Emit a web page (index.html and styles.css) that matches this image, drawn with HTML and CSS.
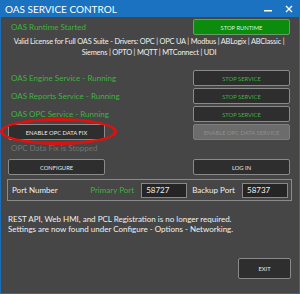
FILE: index.html
```html
<!DOCTYPE html>
<html lang="en">
<head>
    <meta charset="UTF-8">
    <title>OAS Service Control</title>
    <link rel="stylesheet" href="styles.css">
</head>
<body>
    <div class="window">
        <div class="title-bar">
            <span class="title">OAS SERVICE CONTROL</span>
            <span class="controls">
                <svg width="8" height="8" viewBox="0 0 8 8"><rect x="0" y="5" width="8" height="1.5" fill="#fff"/></svg>
                <svg width="8" height="8" viewBox="0 0 8 8"><path d="M1 1 L7 7 M7 1 L1 7" stroke="#fff" stroke-width="1.4"/></svg>
            </span>
        </div>

        <div class="content">
            <div class="row first">
                <span class="status green">OAS Runtime Started</span>
                <button class="btn btn-run">STOP RUNTIME</button>
            </div>

            <p class="license">Valid License for Full OAS Suite - Drivers: OPC | OPC UA | Modbus | ABLogix | ABClassic |<br>
                Siemens | OPTO | MQTT | MTConnect | UDI</p>

            <div class="services">
                <div class="row">
                    <span class="status green">OAS Engine Service - Running</span>
                    <button class="btn btn-green">STOP SERVICE</button>
                </div>
                <div class="row">
                    <span class="status green">OAS Reports Service - Running</span>
                    <button class="btn btn-green">STOP SERVICE</button>
                </div>
                <div class="row">
                    <span class="status green">OAS OPC Service - Running</span>
                    <button class="btn btn-green">STOP SERVICE</button>
                </div>
                <div class="row">
                    <span class="highlight">
                        <button class="btn">ENABLE OPC DATA FIX</button>
                        <span class="ring"></span>
                    </span>
                    <button class="btn btn-disabled">ENABLE OPC DATA SERVICE</button>
                </div>
            </div>

            <div class="status gray fix-status">OPC Data Fix is Stopped</div>

            <div class="row">
                <button class="btn">CONFIGURE</button>
                <button class="btn">LOG IN</button>
            </div>

            <div class="ports">
                <span class="port-label">Port Number</span>
                <span class="green">Primary Port</span>
                <span class="port-box">58727</span>
                <span class="backup">Backup Port</span>
                <span class="port-box">58737</span>
            </div>

            <p class="note">REST API, Web HMI, and PCL Registration is no longer required.<br>
                Settings are now found under Configure - Options - Networking.</p>

            <div class="footer">
                <button class="btn btn-exit">EXIT</button>
            </div>
        </div>
    </div>
</body>
</html>
```

FILE: styles.css
```css
/* Dark service control window */
body {
    margin: 0;
    font-family: 'Lato', 'Open Sans', sans-serif;
    background-color: #464646;
}

.window {
    width: 300px;
    height: 294px;
    box-sizing: border-box;
    background-color: #464646;
    border: 1px solid #1b6fb8;
    border-top: none;
}

.title-bar {
    height: 17px;
    background-color: #1b72c0;
    color: #fff;
    display: flex;
    align-items: center;
    justify-content: space-between;
    padding: 0 7px 0 5px;
    margin: 0 -1px;
}

.title {
    font-size: 10px;
}

.controls {
    display: flex;
    gap: 13px;
}

.content {
    padding: 2px 9px 0 7px;
}

.row {
    display: flex;
    justify-content: space-between;
    align-items: center;
    height: 16px;
}

.services .row {
    margin-bottom: 2px;
}

.status {
    font-size: 8px;
    padding-left: 3px;
}

.green {
    color: #3cb43c;
}

.gray {
    color: #737373;
}

.btn {
    width: 97px;
    height: 16px;
    box-sizing: border-box;
    padding: 0;
    font-family: inherit;
    font-size: 5.8px;
    color: #e8e8e8;
    background-color: #2e2e2e;
    border: 1px solid #8a8a8a;
    border-radius: 2px;
}

.btn-run {
    background-color: #0c8c0c;
    border-color: #6a9a6a;
    color: #d8f0d8;
}

.btn-green {
    color: #3cb43c;
}

.btn-disabled {
    background-color: #6c6c6c;
    border-color: #7c7c7c;
    color: #8e8e8e;
}

.license {
    margin: 0 -6px 0;
    padding-top: 1px;
    font-size: 7.4px;
    letter-spacing: -0.2px;
    white-space: nowrap;
    line-height: 11px;
    color: #f0f0f0;
    text-align: center;
    height: 34px;
}

.highlight {
    position: relative;
    display: flex;
}

.ring {
    position: absolute;
    left: -8px;
    top: -6px;
    width: 111px;
    height: 21px;
    border: 3px solid #e01010;
    border-radius: 50%;
}

.fix-status {
    margin: 0 0 5px;
    height: 12px;
    line-height: 12px;
}

.ports {
    display: flex;
    align-items: center;
    margin: 4px -2px 0 -1px;
    height: 20px;
    border: 1px solid #8a8a8a;
    font-size: 8px;
    color: #f0f0f0;
    padding: 0 3px 0 4px;
}

.port-label {
    flex: 1;
}

.port-box {
    width: 46px;
    height: 15px;
    box-sizing: border-box;
    margin-left: 7px;
    padding-left: 4px;
    line-height: 13px;
    background-color: #252525;
    border: 1px solid #888;
    color: #f0f0f0;
}

.backup {
    margin-left: 5px;
}

.note {
    margin: 13px 0 0;
    font-size: 8px;
    line-height: 10px;
    color: #f0f0f0;
}

.footer {
    display: flex;
    justify-content: flex-end;
    margin-top: 24px;
}

.btn-exit {
    width: 53px;
    height: 21px;
    margin-right: -1px;
}
```
